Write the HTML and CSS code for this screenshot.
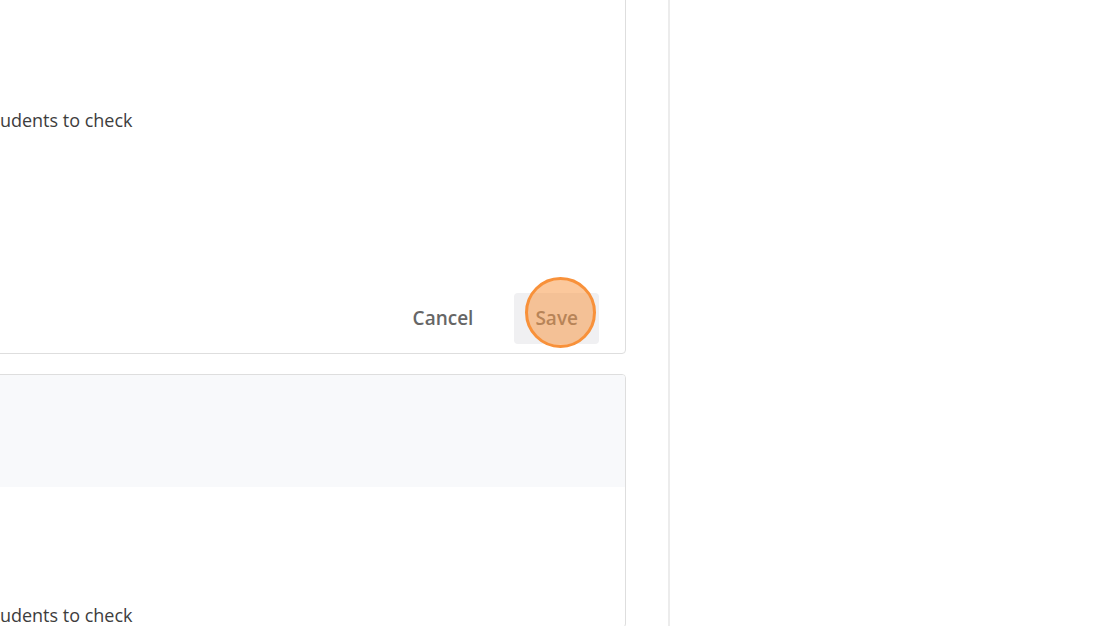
FILE: index.html
```html
<!DOCTYPE html>
<html lang="en">
<head>
    <meta charset="UTF-8">
    <meta name="viewport" content="width=device-width, initial-scale=1.0">
    <title>Question settings</title>
    <link rel="stylesheet" href="styles.css">
</head>
<body>
    <div class="page">
        <div class="main">
            <div class="card card-edit">
                <div class="option">Allow students to check</div>
                <div class="footer">
                    <button class="btn btn-cancel">Cancel</button>
                    <button class="btn btn-save">
                        Save
                        <span class="click-mark"></span>
                    </button>
                </div>
            </div>

            <div class="card card-next">
                <div class="card-head"></div>
                <div class="card-body">
                    <div class="option">Allow students to check</div>
                </div>
            </div>
        </div>
        <div class="sidebar"></div>
    </div>
</body>
</html>
```

FILE: styles.css
```css
body {
    margin: 0;
    font-family: "Open Sans", "Liberation Sans", sans-serif;
    color: #3d3d3d;
    background-color: #fff;
    overflow: hidden;
}
.page {
    display: flex;
    height: 626px;
    gap: 42px;
}
.main {
    width: 716px;
    margin-left: -90px;
    flex-shrink: 0;
}
.card {
    border: 1px solid #dedede;
    border-radius: 4px;
    background-color: #fff;
}
.card-edit {
    margin-top: -20px;
    padding: 0 26px 9px 24px;
}
.option {
    font-size: 18px;
    line-height: 24px;
}
.card-edit .option {
    padding-top: 127px;
}
.footer {
    display: flex;
    justify-content: flex-end;
    gap: 21px;
    margin-top: 161px;
}
.btn {
    font-family: inherit;
    font-size: 19px;
    font-weight: 600;
    height: 51px;
    padding-bottom: 2px;
    border: none;
    border-radius: 4px;
    background: none;
    cursor: pointer;
}
.btn-cancel {
    color: #666;
    padding-left: 20px;
    padding-right: 20px;
}
.btn-save {
    position: relative;
    color: #767676;
    background-color: #f0f0f2;
    padding-left: 21px;
    padding-right: 21px;
}
.click-mark {
    position: absolute;
    left: 50%;
    top: 50%;
    width: 65px;
    height: 65px;
    margin-left: -32px;
    margin-top: -42px;
    border: 3px solid #f8913a;
    border-radius: 50%;
    background-color: rgba(247, 146, 58, 0.5);
}
.card-next {
    margin-top: 20px;
    overflow: hidden;
}
.card-head {
    height: 112px;
    background-color: #f8f9fb;
}
.card-body {
    padding: 116px 24px 0 24px;
}
.sidebar {
    flex: 1;
    border-left: 2px solid #ececec;
}
```
